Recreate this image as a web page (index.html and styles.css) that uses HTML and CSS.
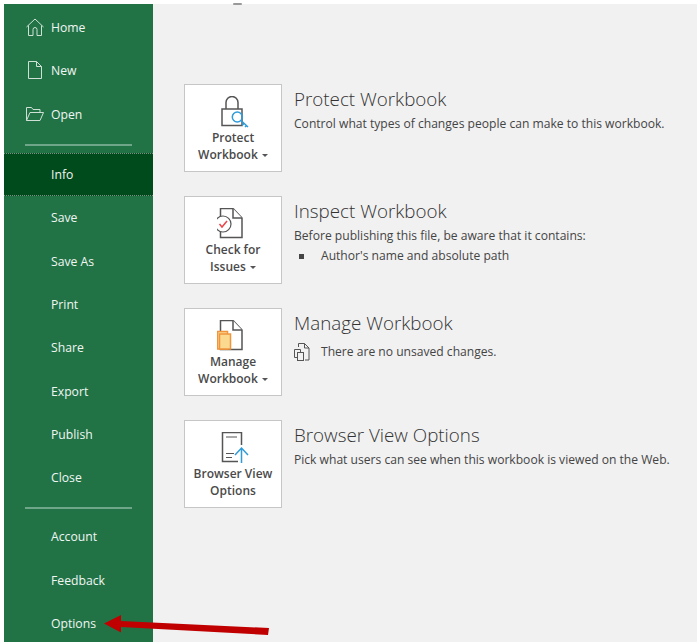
FILE: index.html
```html
<!DOCTYPE html>
<html lang="en">
  <head>
    <title>Info</title>
    <link rel="stylesheet" href="styles.css">
  </head>

  <body>
    <div class="page">
      <nav class="sidebar">
        <a class="item">
          <svg class="nav-icon" width="20" height="20" viewBox="0 0 20 20">
            <path d="M1.5 10 10 2l8.500 8M3.500 8.500V18.500H8V12.500a2 2 0 0 1 4 0V18.500h4.500V8.500"/>
          </svg>
          Home
        </a>
        <a class="item">
          <svg class="nav-icon" width="20" height="20" viewBox="0 0 20 20">
            <path d="M3.500 1.500h8l5 5v12h-13zM11.500 1.500v5h5"/>
          </svg>
          New
        </a>
        <a class="item">
          <svg class="nav-icon" width="20" height="20" viewBox="0 0 20 20">
            <path d="M1.500 16.500v-13h5l1.500 2h7v3M1.500 16.500h13.500l3.500-8h-13.500z"/>
          </svg>
          Open
        </a>
        <div class="divider"></div>
        <a class="item active">Info</a>
        <a class="item">Save</a>
        <a class="item">Save As</a>
        <a class="item">Print</a>
        <a class="item">Share</a>
        <a class="item">Export</a>
        <a class="item">Publish</a>
        <a class="item">Close</a>
        <div class="divider lower"></div>
        <a class="item">Account</a>
        <a class="item">Feedback</a>
        <a class="item">Options</a>
      </nav>

      <main class="content">
        <section class="row">
          <button class="tile">
            <svg width="32" height="32" viewBox="0 0 32 32">
              <path class="line" d="M9 13V6.500a6 6 0 0 1 12 0V13"/>
              <rect class="line" x="5" y="13" width="20" height="16.500"/>
              <circle class="key" cx="20.300" cy="21" r="5"/>
              <path class="key" d="M24 24.500 31 31M27 27.500l-2 2M29.500 29.500l-1.500 1.500"/>
            </svg>
            <span>Protect<br>Workbook <i class="caret"></i></span>
          </button>
          <div class="text">
            <h2>Protect Workbook</h2>
            <p>Control what types of changes people can make to this workbook.</p>
          </div>
        </section>

        <section class="row">
          <button class="tile">
            <svg width="32" height="32" viewBox="0 0 32 32">
              <path class="line" d="M3.500 .5H16L25 10V29.500H3.500z"/>
              <path class="line" d="M16 .5V10H25"/>
              <circle class="line badge" cx="6" cy="16" r="8"/>
              <path class="check" d="M2.500 16 5 19 10 13"/>
            </svg>
            <span>Check for<br>Issues <i class="caret"></i></span>
          </button>
          <div class="text">
            <h2>Inspect Workbook</h2>
            <p>Before publishing this file, be aware that it contains:</p>
            <p class="bullet">Author's name and absolute path</p>
          </div>
        </section>

        <section class="row">
          <button class="tile">
            <svg width="32" height="32" viewBox="0 0 32 32">
              <path class="line" d="M3.500 .5H16L25 10V29.500H3.500z"/>
              <path class="line" d="M16 .5V10H25"/>
              <rect class="sheet" x=".5" y="11.500" width="10" height="17.500"/>
              <rect class="sheet" x="2.500" y="14" width="11" height="15"/>
            </svg>
            <span>Manage<br>Workbook <i class="caret"></i></span>
          </button>
          <div class="text">
            <h2>Manage Workbook</h2>
            <p class="versions">
              <svg width="16" height="18" viewBox="0 0 16 18">
                <path class="line thin" d="M4.500 4V.5H10.500L15 5V17H11M10.500 .5V5H15"/>
                <path class="line thin" d="M.5 6.500H6.500V9M.5 6.500V14.500H3"/>
                <rect class="line thin" x="3.500" y="9.500" width="6" height="8"/>
              </svg>
              There are no unsaved changes.
            </p>
          </div>
        </section>

        <section class="row">
          <button class="tile">
            <svg width="32" height="32" viewBox="0 0 32 32">
              <path class="line" d="M24.500 13V.5H5.500V29.500H21"/>
              <path class="line thin" d="M9 5H20M9 21.500H17M9 25.500H15"/>
              <path class="key" d="M24.500 31V16M18 23l6.500-7 6.500 7"/>
            </svg>
            <span>Browser View<br>Options</span>
          </button>
          <div class="text">
            <h2>Browser View Options</h2>
            <p>Pick what users can see when this workbook is viewed on the Web.</p>
          </div>
        </section>
      </main>
    </div>

    <div class="top-mark"></div>

    <svg class="arrow" width="699" height="644" viewBox="0 0 699 644">
      <path d="M104 623.500 121 615 121 621 269 628 268 635 121 627 121 632.500z"/>
    </svg>
  </body>
</html>
```

FILE: styles.css
```css
* {
  box-sizing: border-box;
}

html,
body {
  margin: 0;
  height: 100%;
  background-color: white;
  overflow: hidden;
}

body {
  font-family: "Open Sans", "Liberation Sans", sans-serif;
  position: relative;
}

.page {
  display: flex;
  height: 644px;
  padding: 4px 2px 2px 4px;
}

.sidebar {
  width: 149px;
  flex-shrink: 0;
  padding-top: 2px;
  background-color: #217346;
  color: #f1f6f3;
  font-size: 12.200px;
  overflow: hidden;
}

.item {
  display: flex;
  align-items: center;
  height: 43.300px;
  padding-left: 47px;
  position: relative;
}

.nav-icon {
  position: absolute;
  left: 21px;
  top: 11px;
  fill: none;
  stroke: #cfe0d6;
  stroke-width: 1;
}

.divider {
  height: 2px;
  margin: 8px 21px 7px;
  background-color: #6fa689;
}

.divider.lower {
  margin: 8px 21px 6px;
}

.item.active {
  background-color: #004b1c;
  border-top: 1px dotted #7c8f83;
  border-bottom: 1px dotted #7c8f83;
}

.content {
  flex: 1;
  padding: 80px 0 0 31px;
  background-color: #f1f1f1;
  color: #444;
}

.row {
  display: flex;
  gap: 12px;
  height: 112px;
}

.tile {
  display: flex;
  flex-direction: column;
  align-items: center;
  width: 98px;
  height: 88px;
  padding: 11px 0 0;
  border: 1px solid #c6c6c6;
  background-color: white;
  color: #4a4a4a;
  font-family: inherit;
  font-size: 12px;
  font-weight: 600;
  line-height: 17px;
}

.tile svg {
  display: block;
  flex-shrink: 0;
}

.tile span {
  margin-top: 1px;
  white-space: nowrap;
}

.caret {
  display: inline-block;
  margin-left: 1px;
  vertical-align: 2px;
  border-top: 3px solid #555;
  border-left: 3px solid transparent;
  border-right: 3px solid transparent;
}

.line {
  fill: white;
  stroke: #555;
  stroke-width: 1.500;
}

.line.thin {
  fill: none;
  stroke-width: 1;
}

.key {
  fill: none;
  stroke: #2f9bd8;
  stroke-width: 1.500;
}

.badge {
  stroke-width: 1.200;
}

.check {
  fill: none;
  stroke: #e8474c;
  stroke-width: 1.500;
}

.sheet {
  fill: #fbd98f;
  stroke: #f0953e;
  stroke-width: 1.500;
}

.text {
  padding-top: 1px;
}

h2 {
  margin: 0;
  font-size: 18.800px;
  font-weight: 300;
  line-height: 29px;
  color: #333;
  white-space: nowrap;
}

p {
  margin: 0;
  font-size: 12.100px;
  line-height: 20px;
  white-space: nowrap;
}

.bullet {
  display: flex;
  align-items: center;
  padding-left: 27px;
  position: relative;
}

.bullet::before {
  content: "";
  position: absolute;
  left: 5px;
  top: 8px;
  width: 5px;
  height: 5px;
  background-color: #444;
}

.versions {
  display: flex;
  align-items: center;
  gap: 11px;
  padding-top: 4px;
}

.top-mark {
  position: absolute;
  left: 233px;
  top: 3px;
  width: 9px;
  height: 2px;
  border-radius: 1px;
  background-color: #999;
}

.arrow {
  position: absolute;
  left: 0;
  top: 0;
  fill: #c00000;
}
```
